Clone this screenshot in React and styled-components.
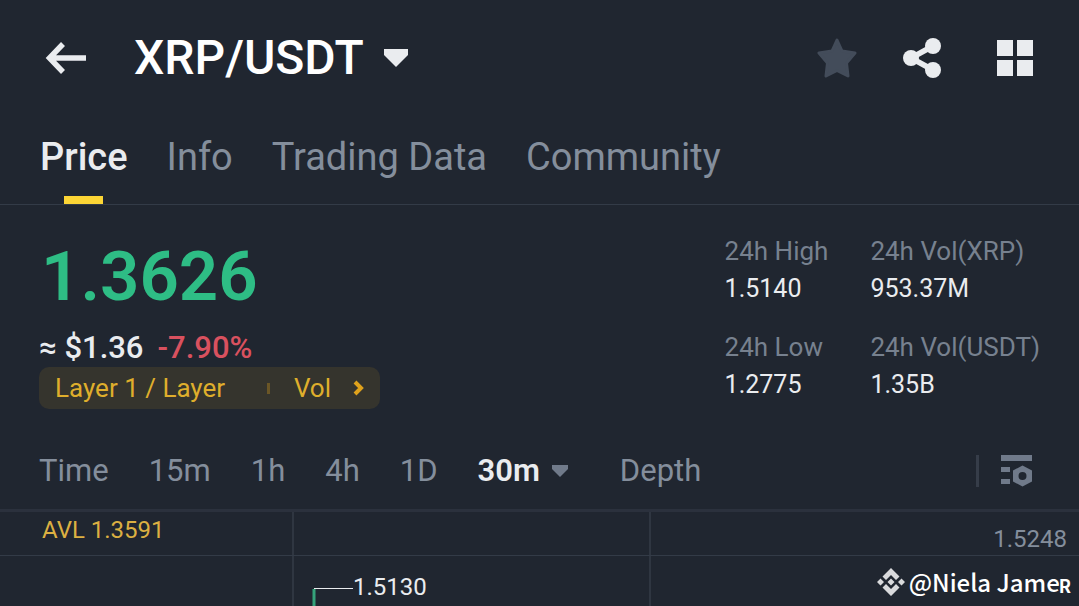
import styled, { createGlobalStyle } from "styled-components";

const GlobalStyle = createGlobalStyle`
  * {
    box-sizing: border-box;
  }
  body {
    margin: 0;
    background: #202630;
    color: #eaecef;
    font-family: Roboto, "Noto Sans", sans-serif;
    overflow: hidden;
  }
`;

const Page = styled.div`
  display: flex;
  flex-direction: column;
  min-height: 100vh;
  overflow: hidden;
`;

const Header = styled.header`
  display: flex;
  align-items: center;
  height: 116px;
  padding: 0 44px;
`;

const IconButton = styled.button`
  display: flex;
  padding: 0;
  border: none;
  background: none;
  color: ${(props) => props.$color || "#eaecef"};
  cursor: pointer;
`;

const PairButton = styled.button`
  display: flex;
  align-items: center;
  gap: 20px;
  margin-left: 47px;
  padding: 0;
  border: none;
  background: none;
  color: #ffffff;
  font-family: inherit;
  font-size: 48px;
  font-weight: 500;
  line-height: 56px;
  cursor: pointer;
`;

const HeaderActions = styled.div`
  display: flex;
  align-items: center;
  gap: 45px;
  margin-left: auto;
`;

const Tabs = styled.nav`
  display: flex;
  gap: 39px;
  height: 89px;
  padding: 0 40px;
  border-bottom: 1px solid #333b47;
`;

const Tab = styled.a`
  display: flex;
  flex-direction: column;
  align-items: center;
  justify-content: space-between;
  padding-top: 16px;
  color: ${(props) => (props.$active ? "#eaecef" : "#848e9c")};
  font-size: 38px;
  font-weight: ${(props) => (props.$active ? 500 : 400)};
  line-height: 50px;
  text-decoration: none;

  &::after {
    content: "";
    width: 39px;
    height: 8px;
    background: ${(props) => (props.$active ? "#fcd535" : "transparent")};
  }
`;

const Summary = styled.section`
  display: flex;
  justify-content: space-between;
  padding: 28px 39px 24px;
`;

const Price = styled.div`
  padding: 4px 0 0 2px;
  color: #2ebd85;
  font-size: 69px;
  font-weight: 600;
  line-height: 80px;
`;

const Change = styled.div`
  display: flex;
  gap: 14px;
  margin-top: 12px;
  font-size: 31px;
  font-weight: 500;
  line-height: 38px;
`;

const Down = styled.span`
  color: #d9515f;
`;

const TagButton = styled.button`
  display: flex;
  align-items: center;
  width: 341px;
  height: 42px;
  padding: 0 15px 0 16px;
  border: none;
  border-radius: 10px;
  background: #35342d;
  color: #dfae2c;
  font-family: inherit;
  font-size: 26px;
  cursor: pointer;
`;

const TagDivider = styled.span`
  width: 3px;
  height: 11px;
  margin: 0 24px 0 auto;
  background: #6b5626;
`;

const TagArrow = styled.svg`
  margin-left: 22px;
`;

const Stats = styled.dl`
  display: grid;
  grid-template-columns: auto auto;
  align-content: start;
  gap: 22px 42px;
  margin: 0;
  line-height: 37px;
`;

const StatName = styled.dt`
  color: #77818f;
  font-size: 26px;
`;

const StatValue = styled.dd`
  margin: 0;
  font-size: 25px;
`;

const Intervals = styled.div`
  display: flex;
  align-items: center;
  gap: 40px;
  height: 76px;
  padding: 0 46px 0 39px;
`;

const Interval = styled.button`
  display: flex;
  align-items: center;
  gap: 12px;
  margin-right: ${(props) => (props.$active ? "12px" : "0")};
  padding: 0;
  border: none;
  background: none;
  color: ${(props) => (props.$active ? "#eaecef" : "#848e9c")};
  font-family: inherit;
  font-size: 31px;
  font-weight: ${(props) => (props.$active ? 600 : 400)};
  line-height: 42px;
  cursor: pointer;
`;

const ChartTools = styled.div`
  display: flex;
  align-items: center;
  gap: 22px;
  margin-left: auto;

  &::before {
    content: "";
    width: 3px;
    height: 32px;
    background: #363d49;
  }
`;

const Chart = styled.section`
  position: relative;
  flex: 1;
  min-height: 97px;
  border-top: 3px solid #2b313d;
  font-size: 24px;
  line-height: 28px;
`;

const ChartCanvas = styled.svg`
  position: absolute;
  inset: 0;
  width: 100%;
  height: 100%;
`;

const Average = styled.div`
  position: absolute;
  top: 4px;
  left: 42px;
  color: #dcb042;
`;

const HighMark = styled.div`
  position: absolute;
  top: 61px;
  left: 353px;
`;

const AxisLabel = styled.div`
  position: absolute;
  top: 13px;
  right: 12px;
  color: #848e9c;
`;

const Author = styled.div`
  position: absolute;
  top: 50px;
  right: 8px;
  display: flex;
  align-items: center;
  gap: 4px;
  height: 40px;
  color: #ffffff;
  font-family: "Noto Sans CJK SC", "Noto Sans", sans-serif;
  font-size: 24px;
  font-weight: 500;
  line-height: 32px;
`;

const AuthorMark = styled.small`
  margin-left: -5px;
  padding-top: 5px;
  font-size: 18px;
  font-weight: 700;
  line-height: 20px;
  text-shadow: -1px 0 #202630;
`;

const tabs = ["Price", "Info", "Trading Data", "Community"];

const stats = [
  { name: "24h High", value: "1.5140" },
  { name: "24h Vol(XRP)", value: "953.37M" },
  { name: "24h Low", value: "1.2775" },
  { name: "24h Vol(USDT)", value: "1.35B" },
];

const intervals = ["Time", "15m", "1h", "4h", "1D", "30m", "Depth"];

const Caret = ({ width, height, color }) => (
  <svg width={width} height={height} viewBox="0 0 24 18" fill={color}>
    <path d="M0 0H24V6L12 18L0 6Z" />
  </svg>
);

const App = () => {
  return (
    <Page>
      <GlobalStyle />
      <Header>
        <IconButton aria-label="Back">
          <svg width="43" height="32" viewBox="0 0 43 32" fill="none">
            <path d="M42 16H6M19 2L5.500 16L19 30" stroke="currentColor" strokeWidth="5.5" />
          </svg>
        </IconButton>
        <PairButton>
          XRP/USDT
          <Caret width={24} height={18} color="#eaecef" />
        </PairButton>
        <HeaderActions>
          <IconButton aria-label="Favorite" $color="#434c5a">
            <svg width="40" height="40" viewBox="0 0 40 40">
              <path
                d="M20 2L25 13L38 15L29.500 25L31 38L20 32.500L9 38L10.500 25L2 15L15 13Z"
                fill="currentColor"
                stroke="currentColor"
                strokeWidth="3"
                strokeLinejoin="round"
              />
            </svg>
          </IconButton>
          <IconButton aria-label="Share">
            <svg width="40" height="40" viewBox="0 0 40 40" fill="currentColor">
              <path d="M31 8L9 20L31 32" fill="none" stroke="currentColor" strokeWidth="5.5" />
              <circle cx="31" cy="8" r="8" />
              <circle cx="9" cy="20" r="8" />
              <circle cx="31" cy="32" r="8" />
            </svg>
          </IconButton>
          <IconButton aria-label="More">
            <svg width="48" height="36" viewBox="0 0 48 36" fill="currentColor">
              <path d="M10 0H26V16H10ZM30 0H46V16H30ZM10 20H26V36H10ZM30 20H46V36H30Z" />
            </svg>
          </IconButton>
        </HeaderActions>
      </Header>
      <Tabs>
        {tabs.map((tab) => (
          <Tab key={tab} href="#" $active={tab === "Price"}>
            {tab}
          </Tab>
        ))}
      </Tabs>
      <Summary>
        <div>
          <Price>1.3626</Price>
          <Change>
            <span>≈ $1.36</span>
            <Down>-7.90%</Down>
          </Change>
          <TagButton>
            Layer 1 / Layer
            <TagDivider />
            Vol
            <TagArrow width="12" height="16" viewBox="0 0 12 16" fill="none">
              <path d="M2 2L8 8L2 14" stroke="#dfa21c" strokeWidth="4" />
            </TagArrow>
          </TagButton>
        </div>
        <Stats>
          {stats.map((stat) => (
            <div key={stat.name}>
              <StatName>{stat.name}</StatName>
              <StatValue>{stat.value}</StatValue>
            </div>
          ))}
        </Stats>
      </Summary>
      <Intervals>
        {intervals.map((interval) => (
          <Interval key={interval} $active={interval === "30m"}>
            {interval}
            {interval === "30m" && <Caret width={16} height={12} color="#707a8a" />}
          </Interval>
        ))}
        <ChartTools>
          <IconButton aria-label="Chart settings" $color="#707a8a">
            <svg width="32" height="32" viewBox="0 0 32 32" fill="currentColor">
              <path d="M0 0H31V6H0ZM0 12H9V17H0ZM0 24H9V29H0Z" />
              <path
                fillRule="evenodd"
                d="M21.500 10.500L31 15.500V26.500L21.500 31.500L12 26.500V15.500ZM21.500 17A4 4 0 1 0 21.500 25A4 4 0 1 0 21.500 17Z"
              />
            </svg>
          </IconButton>
        </ChartTools>
      </Intervals>
      <Chart>
        <ChartCanvas>
          <path d="M293 0V200M650 0V200" stroke="#2f3641" strokeWidth="2" />
          <path d="M0 43.5H4000" stroke="#333b47" />
          <path d="M314 77V200" stroke="#35a27a" strokeWidth="3" />
          <path d="M314 76.5H353" stroke="#eaecef" />
        </ChartCanvas>
        <Average>AVL 1.3591</Average>
        <AxisLabel>1.5248</AxisLabel>
        <HighMark>1.5130</HighMark>
        <Author>
          <svg width="28" height="28" viewBox="0 0 28 28" fill="#d9dadc">
            <path d="M14 0L22.500 8.500L19 12L14 7L9 12L5.500 8.500Z" />
            <path d="M14 28L22.500 19.500L19 16L14 21L9 16L5.500 19.500Z" />
            <path d="M3.500 10.500L7 14L3.500 17.500L0 14ZM24.500 10.500L28 14L24.500 17.500L21 14ZM14 10.500L17.500 14L14 17.500L10.500 14Z" />
          </svg>
          @Niela Jame
          <AuthorMark>R</AuthorMark>
        </Author>
      </Chart>
    </Page>
  );
};

export default App;
